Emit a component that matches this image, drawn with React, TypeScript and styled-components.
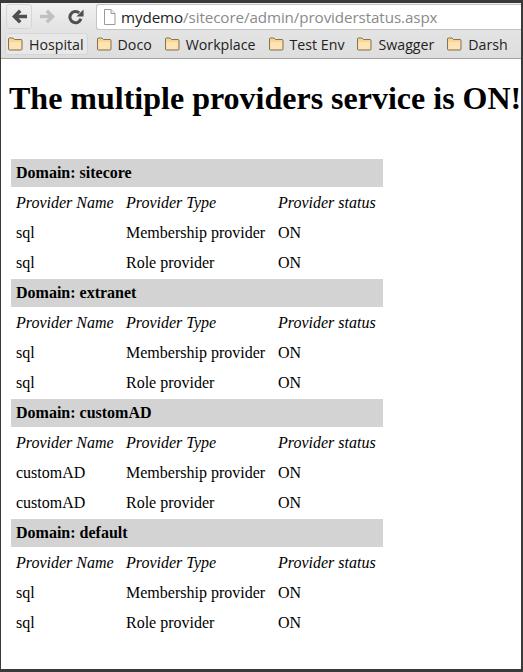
import React from "react";
import styled, { createGlobalStyle } from "styled-components";

const domains = [
  { name: "sitecore", provider: "sql" },
  { name: "extranet", provider: "sql" },
  { name: "customAD", provider: "customAD" },
  { name: "default", provider: "sql" },
];

const bookmarks = ["Hospital", "Doco", "Workplace", "Test Env", "Swagger", "Darsh", ""];

const GlobalStyle = createGlobalStyle`
  html, body {
    margin: 0;
    padding: 0;
    background: #fff;
  }
`;

const BrowserWindow = styled.div`
  box-sizing: border-box;
  width: 523px;
  height: 672px;
  overflow: hidden;
  border-style: solid;
  border-color: #3a3a3a;
  border-width: 3px 2px 3px 1px;
  background: #fff;
  display: flex;
  flex-direction: column;
`;

const Chrome = styled.header`
  height: 56px;
  flex: none;
  box-sizing: border-box;
  background: linear-gradient(#f1f1f1, #e4e4e4 45%, #dedede);
  border-bottom: 1px solid #a3a3a3;
  font-family: "Open Sans", "Noto Sans", sans-serif;
`;

const Toolbar = styled.div`
  height: 30px;
  display: flex;
  align-items: flex-start;
  padding: 1px 0 0 5px;
  box-sizing: border-box;
`;

const NavButton = styled.div<{ $framed?: boolean; $width: number }>`
  box-sizing: border-box;
  width: ${(p) => p.$width}px;
  height: 25px;
  flex: none;
  display: flex;
  align-items: center;
  justify-content: center;
  border-radius: 3px;
  border: 1px solid ${(p) => (p.$framed ? "#d6d6d6" : "transparent")};
  background: ${(p) => (p.$framed ? "linear-gradient(#f0f0f0, #e6e6e6)" : "none")};
`;

const AddressBar = styled.div`
  flex: 1;
  height: 26px;
  margin-left: 6px;
  box-sizing: border-box;
  display: flex;
  align-items: center;
  gap: 5px;
  padding-left: 6px;
  background: #fff;
  border: 1px solid #c4c4c4;
  border-right: none;
  border-radius: 3px 0 0 3px;
  font-size: 15.2px;
  letter-spacing: -0.1px;
  color: #8a8a8a;
  white-space: nowrap;
`;

const Host = styled.span`
  color: #222;
`;

const BookmarkBar = styled.div`
  height: 25px;
  display: flex;
  align-items: flex-start;
  padding-left: 4px;
  overflow: hidden;
`;

const Bookmark = styled.div<{ $active?: boolean }>`
  box-sizing: border-box;
  height: 22px;
  flex: none;
  display: flex;
  align-items: center;
  gap: 6px;
  padding: 0 3px 0 2px;
  margin-right: 6px;
  border-radius: 3px;
  border: 1px solid ${(p) => (p.$active ? "#d6d6d6" : "transparent")};
  background: ${(p) => (p.$active ? "#e8e8e8" : "none")};
  font-size: 14.2px;
  color: #222;
  white-space: nowrap;
`;

const Page = styled.main`
  flex: 1;
  padding: 0 8px;
  font-family: "Liberation Serif", "Times New Roman", serif;
  font-size: 16px;
  color: #000;
  white-space: nowrap;
`;

const Title = styled.h1`
  margin: 21px 0 40px;
  font-size: 32px;
  line-height: 37px;
  font-weight: bold;
`;

const StatusTable = styled.table`
  width: 376px;
  table-layout: fixed;
  border-collapse: separate;
  border-spacing: 2px;
`;

const Column = styled.col<{ $width: number }>`
  width: ${(p) => p.$width}px;
`;

const DomainCell = styled.td`
  padding: 5px;
  background: #d3d3d3;
  font-weight: bold;
  line-height: 18px;
`;

const Cell = styled.td`
  padding: 5px;
  line-height: 18px;
`;

const HeadCell = styled(Cell)`
  font-style: italic;
`;

const FolderIcon = () => (
  <svg width="15" height="14" viewBox="0 0 15 14">
    <path
      d="M.5 3 V2 Q.5 1 1.5 1 H5 L6.5 2.5 H13 Q14 2.5 14 3.5 V12 Q14 13 13 13 H1.5 Q.5 13 .5 12 Z"
      fill="#fcd48b"
      stroke="#7d7463"
      strokeWidth="1"
    />
    <path d="M1.5 5 H13 V12 H1.5 Z" fill="#fee4b4" />
  </svg>
);

const BackIcon = () => (
  <svg width="17" height="15" viewBox="0 0 17 15">
    <path d="M1 7.5 L8 .5 L10.5 3 L7.5 5.7 H16 V9.3 H7.5 L10.5 12 L8 14.5 Z" fill="#4f4f4f" />
  </svg>
);

const ForwardIcon = () => (
  <svg width="17" height="15" viewBox="0 0 17 15">
    <path d="M16 7.5 L9 .5 L6.5 3 L9.5 5.7 H1 V9.3 H9.5 L6.5 12 L9 14.5 Z" fill="#c0c0c0" />
  </svg>
);

const ReloadIcon = () => (
  <svg width="16" height="16" viewBox="0 0 18 18">
    <path d="M14.5 11 A6.3 6.3 0 1 1 12.6 4.4" fill="none" stroke="#4f4f4f" strokeWidth="3.4" />
    <path d="M9.5 8.5 H17.5 V.5 Z" fill="#4f4f4f" />
  </svg>
);

const PageIcon = () => (
  <svg width="13" height="16" viewBox="0 0 13 16">
    <path d="M1.5 .5 H8 L12 4.5 V15.5 H1.5 Z" fill="#fff" stroke="#9a9a9a" />
    <path d="M8 .5 V4.5 H12" fill="#eee" stroke="#9a9a9a" />
  </svg>
);

export default function App() {
  return (
    <>
      <GlobalStyle />
      <BrowserWindow>
        <Chrome>
          <Toolbar>
            <NavButton $framed $width={26}>
              <BackIcon />
            </NavButton>
            <NavButton $width={30}>
              <ForwardIcon />
            </NavButton>
            <NavButton $width={28}>
              <ReloadIcon />
            </NavButton>
            <AddressBar>
              <PageIcon />
              <span>
                <Host>mydemo</Host>/sitecore/admin/providerstatus.aspx
              </span>
            </AddressBar>
          </Toolbar>
          <BookmarkBar>
            {bookmarks.map((label, i) => (
              <Bookmark key={i} $active={i === 0}>
                <FolderIcon />
                {label}
              </Bookmark>
            ))}
          </BookmarkBar>
        </Chrome>
        <Page>
          <Title>The multiple providers service is ON!</Title>
          <StatusTable>
            <colgroup>
              <Column $width={108} />
              <Column $width={150} />
              <Column $width={110} />
            </colgroup>
            <tbody>
              {domains.map((d) => (
                <React.Fragment key={d.name}>
                  <tr>
                    <DomainCell colSpan={3}>Domain: {d.name}</DomainCell>
                  </tr>
                  <tr>
                    <HeadCell>Provider Name</HeadCell>
                    <HeadCell>Provider Type</HeadCell>
                    <HeadCell>Provider status</HeadCell>
                  </tr>
                  <tr>
                    <Cell>{d.provider}</Cell>
                    <Cell>Membership provider</Cell>
                    <Cell>ON</Cell>
                  </tr>
                  <tr>
                    <Cell>{d.provider}</Cell>
                    <Cell>Role provider</Cell>
                    <Cell>ON</Cell>
                  </tr>
                </React.Fragment>
              ))}
            </tbody>
          </StatusTable>
        </Page>
      </BrowserWindow>
    </>
  );
}
